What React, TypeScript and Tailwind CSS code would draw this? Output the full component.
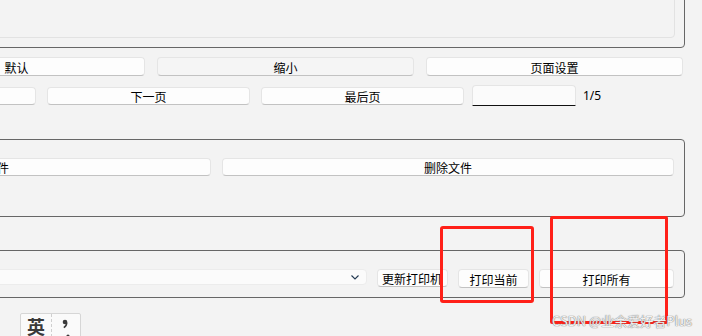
import React from "react";

const font = { fontFamily: '"Noto Sans CJK SC", "Noto Sans", sans-serif' };

function Btn({ label = "", className = "" }: { label?: string; className?: string }) {
  return (
    <div
      className={
        "flex items-center justify-center overflow-hidden whitespace-nowrap rounded-[4px] border border-[#e5e5e5] border-b-[#c2c2c2] pt-[2px] text-[12px] leading-none text-black " +
        className
      }
    >
      {label}
    </div>
  );
}

export default function App() {
  return (
    <div className="relative h-[336px] w-[702px] overflow-hidden bg-[#f3f3f3]" style={font}>
      {/* main window content, shifted left beyond the viewport */}
      <div className="ml-[-400px] flex w-[1085px] flex-col">
        {/* group 1 */}
        <div className="mt-[-60px] h-[108px] rounded-[4px] border border-[#666666] pb-[9px] pr-[9px]">
          <div className="h-full rounded-[4px] border border-[#e2e2e2]" />
        </div>

        {/* row 1 */}
        <div className="mt-[9px] flex gap-[12px] pl-[19px] pr-[2px]">
          <Btn className="h-[19px] flex-1 bg-[#fdfdfd]" />
          <Btn label="默认" className="h-[19px] flex-1 bg-[#fdfdfd]" />
          <Btn label="缩小" className="h-[19px] flex-1 bg-[#f5f5f5]" />
          <Btn label="页面设置" className="h-[19px] flex-1 bg-[#fdfdfd]" />
        </div>

        {/* row 2 */}
        <div className="mt-[9px] flex items-start pl-[19px]">
          <div className="flex gap-[11px]">
            <Btn className="mt-[2px] h-[18px] w-[203px] bg-[#fdfdfd]" />
            <Btn className="mt-[2px] h-[18px] w-[203px] bg-[#fdfdfd]" />
            <Btn label="下一页" className="mt-[2px] h-[18px] w-[203px] bg-[#fdfdfd]" />
            <Btn label="最后页" className="mt-[2px] h-[18px] w-[203px] bg-[#fdfdfd]" />
          </div>
          <div className="ml-[8px] h-[21px] w-[104px] rounded-t-[4px] border border-[#e5e5e5] border-b-[#111111] bg-[#fbfbfb]" />
          <div className="ml-[7px] mt-[5px] text-[12px] leading-none text-black" style={{ fontFamily: '"Noto Sans", sans-serif' }}>
            1/5
          </div>
        </div>

        {/* group 2 */}
        <div className="ml-[148px] mt-[33px] flex h-[78px] gap-[11px] rounded-[4px] border border-[#666666] px-[10px] pt-[18px]">
          <Btn label="添加文件" className="h-[18px] flex-1 bg-[#fdfdfd]" />
          <Btn label="删除文件" className="h-[18px] flex-1 bg-[#fdfdfd]" />
        </div>

        {/* group 3 */}
        <div className="ml-[148px] mt-[33px] flex h-[48px] items-start gap-[10px] rounded-[4px] border border-[#666666] px-[10px] pt-[18px]">
          <div className="flex h-[16px] flex-1 items-center justify-end rounded-[4px] border border-[#ececec] bg-[#fbfbfb] pr-[7px]">
            <svg width="8" height="5" viewBox="0 0 8 5">
              <polyline points="0.5,0.5 4,4 7.5,0.5" fill="none" stroke="#233a52" strokeWidth="1.1" />
            </svg>
          </div>
          <Btn label="更新打印机" className="h-[18px] w-[71px] justify-start bg-[#fdfdfd] pl-[4px]" />
          <Btn label="打印当前" className="h-[19px] w-[71px] bg-[#fdfdfd]" />
          <Btn label="打印所有" className="h-[19px] w-[135px] bg-[#fdfdfd]" />
        </div>
      </div>

      {/* IME toolbar */}
      <div className="ml-[20px] mt-[15px] flex h-[30px] w-[61px] rounded-[2px] border border-[#d6d6d6] bg-[#fafafa]">
        <div className="flex w-[30px] items-start justify-center pt-[3px] text-[18px] font-bold leading-none text-[#3a3a3a]">
          英
        </div>
        <div className="h-full border-l border-dashed border-[#cfcfcf]" />
        <div className="flex flex-1 items-start justify-center pt-[5px]">
          <svg width="10" height="20" viewBox="0 0 10 20">
            <circle cx="4" cy="3" r="2.3" fill="#3a3a3a" />
            <path d="M5.8 3.5 Q5.6 7 2.8 8.6" fill="none" stroke="#3a3a3a" strokeWidth="1.6" />
            <circle cx="7" cy="17" r="1.6" fill="#3a3a3a" />
          </svg>
        </div>
      </div>

      {/* red annotation boxes */}
      <div className="absolute left-[440px] top-[226px] h-[77px] w-[94px] rounded-[3px] border-[3px] border-[#ff2018]" />
      <div className="absolute left-[550px] top-[216px] h-[108px] w-[118px] rounded-[2px] border-[3px] border-[#ff2018]" />

      {/* watermark */}
      <div className="absolute left-[552px] top-[313px] whitespace-nowrap text-[13px] leading-[16px] text-white/90 [text-shadow:0_0_1px_#777,0_0_1px_#777]">
        CSDN @业余爱好者Plus
      </div>
    </div>
  );
}
